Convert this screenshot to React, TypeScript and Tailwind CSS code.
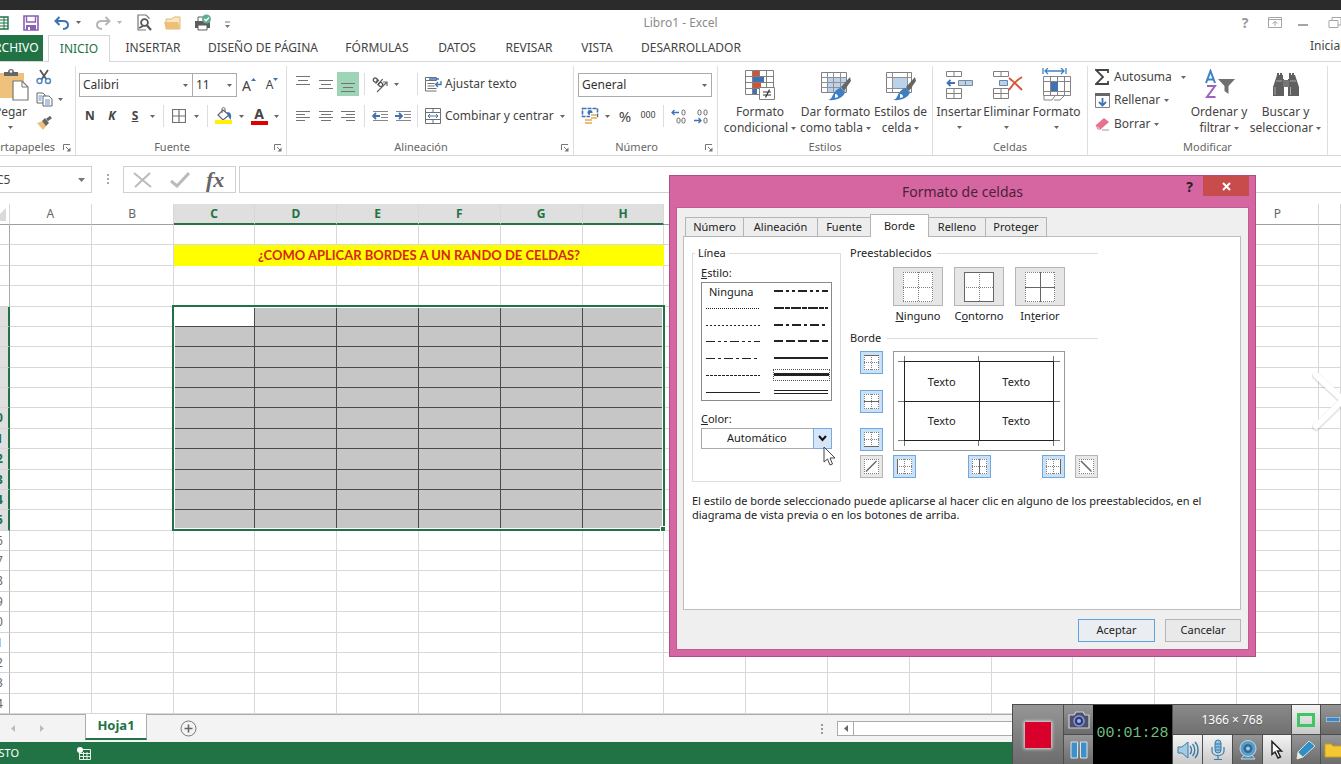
import React from "react";
import clsx from "clsx";

type Kids = { children?: React.ReactNode };

function Svg({ w, h, children, className }: Kids & { w: number; h: number; className?: string }) {
  return (
    <svg width={w} height={h} viewBox={`0 0 ${w} ${h}`} fill="none" aria-hidden="true" className={clsx("shrink-0", className)}>
      {children}
    </svg>
  );
}

function Caret({ light }: { light?: boolean }) {
  return (
    <Svg w={5} h={3}>
      <path d="M0 0h5L2.500 3z" fill={light ? "#b5b5b5" : "#666"} />
    </Svg>
  );
}

/* ---------- quick access toolbar ---------- */

const ExcelLogo = () => (
  <Svg w={20} h={16}>
    <path d="M0 2l11-2v16L0 14z" fill="#1f7246" />
    <path d="M11 2h8v12h-8" fill="#fff" stroke="#1f7246" strokeWidth="1.4" />
    <path d="M11 5h8M11 8h8M11 11h8M15 2v12" stroke="#1f7246" />
  </Svg>
);

const SaveIcon = () => (
  <Svg w={16} h={16}>
    <path d="M1 1h14v14H1z" fill="#fff" stroke="#8a5fb5" strokeWidth="1.6" />
    <path d="M3.5 1v6h9V1" stroke="#8a5fb5" strokeWidth="1.4" />
    <path d="M3 10h10v5H3z" fill="#8a5fb5" />
    <path d="M5 12h2v3H5z" fill="#fff" />
  </Svg>
);

const UndoIcon = ({ color, flip }: { color: string; flip?: boolean }) => (
  <Svg w={16} h={14} className={flip ? "-scale-x-100" : ""}>
    <path d="M5.5 1L1.5 5l4 4" stroke={color} strokeWidth="2" />
    <path d="M2 5h7c3 0 5 1.600 5 4s-2 3.800-5 4" stroke={color} strokeWidth="2" />
  </Svg>
);

const PreviewIcon = () => (
  <Svg w={17} h={17}>
    <path d="M13 5V4l-3-3H2v15h8" stroke="#777" strokeWidth="1.2" />
    <circle cx="8.500" cy="8.500" r="3.400" stroke="#555" strokeWidth="1.800" />
    <path d="M11 11.500l4 4.500" stroke="#555" strokeWidth="2.200" />
    <path d="M3 14l4-2" stroke="#555" strokeWidth="1.500" />
  </Svg>
);

const FolderIcon = () => (
  <Svg w={18} h={14}>
    <path d="M2 13V3h6l2-2h6v12z" fill="#fbe6c4" stroke="#e5b970" />
    <path d="M0 6h14l2 7H2z" fill="#eebf78" />
  </Svg>
);

const PrintIcon = () => (
  <Svg w={18} h={18}>
    <path d="M1 7h15v7H1z" fill="#5d5d5d" />
    <path d="M4 7V3h8v4M4 11h9v5H4z" fill="#fff" stroke="#5d5d5d" />
    <circle cx="12.500" cy="5" r="4.500" fill="#5fae90" />
    <path d="M10.300 5l1.700 1.700 3-3.200" stroke="#fff" strokeWidth="1.300" />
  </Svg>
);

function TitleBar() {
  return (
    <header className="relative flex h-[25px] shrink-0 items-center text-[12px] text-[#8a8a8a]">
      <div className="-ml-[11px] flex items-center">
        <ExcelLogo />
        <button aria-label="Guardar" className="ml-[14px]"><SaveIcon /></button>
        <button aria-label="Deshacer" className="ml-[15px] flex items-center gap-[6px]"><UndoIcon color="#3f72b5" /><Caret /></button>
        <button aria-label="Rehacer" className="ml-[14px] flex items-center gap-[6px]"><UndoIcon color="#b5b5b5" flip /><Caret light /></button>
        <button aria-label="Vista previa" className="ml-[14px]"><PreviewIcon /></button>
        <button aria-label="Abrir" className="ml-[11px]"><FolderIcon /></button>
        <button aria-label="Imprimir" className="ml-[12px]"><PrintIcon /></button>
        <button aria-label="Personalizar" className="ml-[12px] pt-1">
          <Svg w={7} h={8}><path d="M1 1h5" stroke="#777" /><path d="M1 4h5L3.500 7z" fill="#777" /></Svg>
        </button>
      </div>
      <h1 className="flex-1 pl-[212px] pr-[320px] text-center whitespace-nowrap">Libro1 - Excel</h1>
      <div className="-mr-px flex items-center gap-[16px]">
        <button aria-label="Ayuda" className="w-[14px] text-[14px] font-bold text-[#9a9a9a]">?</button>
        <button aria-label="Opciones de cinta">
          <Svg w={14} h={11}><path d="M.5.500h13v10H.5zM.5 2.500h13M7 9V4.500M4.500 6.500L7 4.500l2.500 2" stroke="#a5a5a5" /></Svg>
        </button>
        <button aria-label="Minimizar" className="w-[14px] pt-1"><Svg w={10} h={2}><path d="M0 1h10" stroke="#a5a5a5" strokeWidth="2" /></Svg></button>
        <button aria-label="Restaurar">
          <Svg w={14} h={11}><path d="M1 3.500h9v7H1zM4 3V.5h9V8h-3" stroke="#a5a5a5" /></Svg>
        </button>
      </div>
    </header>
  );
}

function TabRow() {
  const tabs: [string, string][] = [
    ["INSERTAR", "w-[86px]"],
    ["DISEÑO DE PÁGINA", "w-[134px]"],
    ["FÓRMULAS", "w-[94px]"],
    ["DATOS", "w-[66px]"],
    ["REVISAR", "w-[78px]"],
    ["VISTA", "w-[58px]"],
    ["DESARROLLADOR", "w-[130px]"],
  ];
  return (
    <nav className="flex h-[27px] shrink-0 border-b border-[#d6d6d6] text-[12px] whitespace-nowrap text-[#444]">
      <button className="-ml-[18px] flex w-[61px] items-center justify-center bg-[#217346] text-white">ARCHIVO</button>
      <button className="-mb-px ml-[5px] w-[62px] border border-b-0 border-[#d6d6d6] bg-white text-[#217346]">INICIO</button>
      {tabs.map(([label, w]) => (
        <button key={label} className={clsx("flex shrink-0 items-center justify-center", w)}>{label}</button>
      ))}
      <a href="#iniciar" className="-mr-[40px] ml-auto w-[71px] pt-[2px]">Iniciar sesión</a>
    </nav>
  );
}

/* ---------- ribbon ---------- */

function Group({ label, width, launcher, children, className }: Kids & { label: string; width: string; launcher?: boolean; className?: string }) {
  return (
    <section className={clsx("flex shrink-0 flex-col", width, className)}>
      <div className="mt-[4px] flex flex-1 flex-col border-r border-[#dedede]">
        <div className="flex h-[74px]">{children}</div>
        <div className={clsx("relative flex h-[14px] items-center justify-center text-[11px] text-[#666]", launcher && "pr-[18px]")}>
          {label}
          {launcher && (
            <button aria-label={`Más opciones de ${label}`} className="absolute right-[4px] bottom-[2px]">
              <Svg w={8} h={8}><path d="M.5 6V.5H7M3 3l3 3" stroke="#777" /><path d="M7.500 3.500v4h-4z" fill="#777" /></Svg>
            </button>
          )}
        </div>
      </div>
    </section>
  );
}

const Sep = ({ className }: { className?: string }) => <span className={clsx("h-[22px] w-px shrink-0 bg-[#dedede]", className)} />;

function Tool({ label, w, children, on }: Kids & { label: string; w: string; on?: boolean }) {
  return (
    <button aria-label={label} className={clsx("flex h-[24px] shrink-0 items-center justify-center", w, on && "bg-[#9fd5b7]")}>
      {children}
    </button>
  );
}

function Combo({ label, value, width, className }: { label: string; value: string; width: string; className?: string }) {
  return (
    <span className={clsx("relative flex h-[24px] shrink-0 items-center", width, className)}>
      <select aria-label={label} className="h-full w-full appearance-none border border-[#ababab] bg-white pl-[3px] text-[12px] text-[#333]">
        <option>{value}</option>
      </select>
      <span className="pointer-events-none absolute right-[5px]"><Caret /></span>
    </span>
  );
}

const Lines = ({ rows }: { rows: [number, number, number][] }) => (
  <Svg w={16} h={16}>
    {rows.map(([x, y, len]) => <path key={y} d={`M${x} ${y + 0.5}h${len}`} stroke="#737373" />)}
  </Svg>
);

const Indent = ({ out }: { out?: boolean }) => (
  <Svg w={17} h={13}>
    <path d="M1 1.500h15M9 4.500h7M9 7.500h7M1 10.500h15" stroke="#888" />
    <path d={out ? "M8 6H1M4 3L1 6l3 3" : "M0 6h7M4 3l3 3-3 3"} stroke="#3f72b5" strokeWidth="1.800" />
  </Svg>
);

function Big({ icon, lines, width, below }: { icon: React.ReactNode; lines: string[]; width: string; below?: boolean }) {
  return (
    <button className={clsx("flex shrink-0 flex-col items-center text-[12px] leading-[16px] whitespace-nowrap text-[#444]", width)}>
      <span className="flex h-[38px] items-center">{icon}</span>
      {lines.map((t, i) => (
        <span key={t} className="flex items-center gap-[3px]">
          {t}
          {!below && i === lines.length - 1 && <Caret />}
        </span>
      ))}
      {below && <span className="mt-[6px]"><Caret /></span>}
    </button>
  );
}

const PasteIcon = () => (
  <Svg w={32} h={34}>
    <path d="M1 5h26v25H1z" fill="#eec27d" />
    <path d="M7 8V4h4c0-4 6-4 6 0h4v4z" fill="#666" />
    <circle cx="14" cy="3.500" r="1.300" fill="#fff" />
    <path d="M16 13h9l6 6v13H16z" fill="#fff" stroke="#777" strokeWidth="1.200" />
    <path d="M25 13v6h6" stroke="#777" />
  </Svg>
);
const CutIcon = () => (
  <Svg w={16} h={16}>
    <path d="M4 1l6.500 9.500M12 1L5.500 10.500" stroke="#555" strokeWidth="1.800" />
    <circle cx="3.500" cy="12" r="2.500" stroke="#4d82bd" strokeWidth="1.400" />
    <circle cx="12" cy="12" r="2.500" stroke="#4d82bd" strokeWidth="1.400" />
  </Svg>
);
const CopyIcon = () => (
  <Svg w={17} h={15}>
    <path d="M1 1h6l2 2v8H1z" fill="#fff" stroke="#666" />
    <path d="M7 4h6l3 3v7H7z" fill="#fff" stroke="#666" />
    <path d="M2.500 4h4M2.500 6h3M2.500 8h3M9 8h5M9 10h5M9 12h5" stroke="#5d8fc9" />
  </Svg>
);
const BrushIcon = () => (
  <Svg w={17} h={14}>
    <path d="M1 7l6-2 4 4-4 5z" fill="#eebf78" />
    <path d="M6 5l3-3 4 5-3 3z" fill="#666" />
    <path d="M11 4l4-3" stroke="#666" strokeWidth="3" />
  </Svg>
);
const GridIcon = () => (
  <Svg w={14} h={14}><path d="M.5.500h13v13H.5zM7 .5v13M.5 7h13" stroke="#707070" strokeWidth="1.200" /></Svg>
);
const BucketIcon = () => (
  <Svg w={17} h={18}>
    <path d="M8 3l6 5-6 5-5-5z" fill="#fff" stroke="#666" strokeWidth="1.200" />
    <path d="M7 6V2c0-2 3-2 3 0v3" stroke="#666" />
    <path d="M12 5c4 0 5 3 3.500 8L13 9z" fill="#3f72b5" />
    <path d="M0 13h17v4H0z" fill="#fff100" />
  </Svg>
);
const WrapIcon = () => (
  <Svg w={17} h={16}>
    <path d="M.5 1.500h11v3H.5zM.5 4.500v10.500h11M2.500 7.500h7M2.500 10h7M2.500 12.500h9" stroke="#707070" />
    <path d="M4 3h10M16 5v3.500h-5M13 6l-2.500 2.500L13 11" stroke="#3f72b5" strokeWidth="1.300" />
  </Svg>
);
const MergeIcon = () => (
  <Svg w={16} h={16}>
    <path d="M.5.500h15v15H.5zM.5 4.500h15M.5 11.500h15M8 .5v4M8 11.500v4" stroke="#707070" />
    <path d="M3 8h10M5 6L3 8l2 2M11 6l2 2-2 2" stroke="#3f72b5" />
  </Svg>
);
const MoneyIcon = () => (
  <Svg w={18} h={18}>
    <path d="M1.500 1.500h15v8h-15z" fill="#fff" stroke="#3f72b5" strokeWidth="1.600" strokeDasharray="4 1" />
    <circle cx="9" cy="5.500" r="2.500" fill="#3f72b5" />
    <path d="M9 6h7v9H9z" fill="#fff" />
    <path d="M10 7h6v2h-6zM10 10h6v2h-6zM4 12h7v2H4zM4 15h7v2H4z" fill="#ebbf79" />
  </Svg>
);
const Decimals = ({ less }: { less?: boolean }) => (
  <Svg w={16} h={15}>
    {(less ? [[5, 1], [11, 1], [11, 9]] : [[11, 1], [6, 9], [11, 9]]).map(([x, y]) => (
      <rect key={`${x}-${y}`} x={x} y={y} width="3" height="5" rx="1.500" stroke="#666" />
    ))}
    <path d={less ? "M1 11.500h7M5.500 9l2.500 2.500L5.500 14" : "M8 3.500H1M3.500 1L1 3.500 3.500 6"} stroke="#3f72b5" strokeWidth="1.300" />
  </Svg>
);
const CondIcon = () => (
  <Svg w={32} h={32}>
    <path d="M1.500 1.500h28v24h-28zM8.500 1.500v24M15.500 1.500v24M22.500 1.500v24M1.500 7.500h28M1.500 13.500h28M1.500 19.500h28" stroke="#808080" fill="#fff" />
    <path d="M9 2h6v5H9zM9 14h8v5H9z" fill="#d35230" />
    <path d="M9 8h11v5H9zM9 20h4v5H9z" fill="#3f72b5" />
    <path d="M15.500 18.500h15v12h-15z" fill="#fff" stroke="#808080" />
    <path d="M19 23h8M19 26h8M25.500 20.500l-4 8" stroke="#333" strokeWidth="1.200" />
  </Svg>
);
const TableBrush = ({ single }: { single?: boolean }) => (
  <Svg w={32} h={32}>
    <path d="M1.500 3.500h25v20h-25z" fill="#fff" stroke="#808080" />
    <path d={single ? "M7 8h15v11H7z" : "M8 9h18v14H8z"} fill="#bcd2ea" />
    <path d={single ? "M7.500 3.500v20M22.500 3.500v20M1.500 8.500h25M1.500 19.500h25" : "M7.500 3.500v20M13.500 3.500v20M20.500 3.500v20M1.500 8.500h25M1.500 13.500h25M1.500 18.500h25"} stroke="#909090" />
    <path d="M30 8l-9 10 3 4 7-10z" fill="#666" />
    <path d="M21 19l4 4c-1 5-8 9-17 8 4-1 4-4 6-7 2-3 4-5 7-5z" fill="#3f7fc1" />
    <path d="M15 25c2 0 3 1 3 3l-3 1z" fill="#fff" />
  </Svg>
);
const InsertCells = () => (
  <Svg w={30} h={30}>
    <path d="M2.500 1.500h15v5h-15zM10 1.500v5M2.500 18.500h15v10h-15zM10 18.500v10M2.500 23.500h15" fill="#fff" stroke="#808080" />
    <path d="M14.500 10.500h14v5h-14zM21.500 10.500v5" fill="#bcd2ea" stroke="#7a8ba0" />
    <path d="M11 13H3.500M6.500 10l-3 3 3 3" stroke="#3f72b5" strokeWidth="1.800" />
  </Svg>
);
const DeleteCells = () => (
  <Svg w={32} h={30}>
    <path d="M2.500 1.500h15v5h-15zM10 1.500v5M2.500 18.500h15v10h-15zM10 18.500v10M2.500 23.500h15" fill="#fff" stroke="#808080" />
    <path d="M8.500 10.500h8v5h-8z" fill="#bcd2ea" stroke="#6485b0" />
    <path d="M18 8c4 3 9 8 13 12M31 7c-5 3-10 8-13 13" stroke="#d9573b" strokeWidth="2" />
  </Svg>
);
const FormatCells = () => (
  <Svg w={30} h={34}>
    <path d="M1 0v6M24 0v6M3 3h19M6 0L3 3l3 3M19 0l3 3-3 3" stroke="#3f82c4" strokeWidth="1.300" />
    <path d="M1.500 8.500h27v19h-27zM8.500 8.500v19M15.500 8.500v19M22.500 8.500v19M1.500 13.500h27M1.500 23.500h27" fill="#fff" stroke="#858585" />
    <path d="M9 14h7v9H9z" fill="#3f72b5" />
    <path d="M2 28v4h8l3-4M12 32h6l4-4" stroke="#858585" />
  </Svg>
);
const SortIcon = () => (
  <Svg w={32} h={32}>
    <path d="M3 14L7.500 2 12 14M4.500 10.500h6" stroke="#3f82c4" strokeWidth="2" />
    <path d="M4 17h8L4 28h8.500" stroke="#9b62c0" strokeWidth="2" />
    <path d="M15 10h17l-6.500 7v8l-4-3v-5z" fill="#707070" />
  </Svg>
);
const Binoculars = () => (
  <Svg w={28} h={26}>
    <path d="M5 3h6v4h1v17H1V15L4 6zM17 3h6l1 3 3 9v9H16V7h1z" fill="#5f5f5f" />
    <path d="M11 8h6v7h-6z" fill="#777" />
    <path d="M5 2h6M17 2h6" stroke="#5f5f5f" strokeWidth="2" strokeDasharray="2 1" />
    <path d="M3 15v8M18.500 15v8M4 9h6M18 9h6" stroke="#aaa" />
  </Svg>
);

function Ribbon() {
  return (
    <div className="flex h-[94px] shrink-0 border-b border-[#d6d6d6] text-[12px] text-[#444]">
      <Group label="Portapapeles" width="w-[91px]" className="-ml-[15px]" launcher>
        <button className="flex w-[51px] flex-col items-center leading-[16px]">
          <span className="flex h-[38px] items-center pl-1"><PasteIcon /></span>
          Pegar
          <span className="mt-[6px]"><Caret /></span>
        </button>
        <div className="flex flex-col pt-px">
          <button aria-label="Cortar" className="flex h-[20px] items-center"><CutIcon /></button>
          <button aria-label="Copiar" className="flex h-[24px] items-center gap-[5px] pt-px"><CopyIcon /><Caret /></button>
          <button aria-label="Copiar formato" className="flex h-[24px] items-center"><BrushIcon /></button>
        </div>
      </Group>

      <Group label="Fuente" width="w-[211px]" launcher>
        <div className="flex flex-col gap-[7px] pt-[7px] pl-[3px]">
          <div className="flex items-center">
            <Combo label="Fuente" value="Calibri" width="w-[114px]" />
            <Combo label="Tamaño" value="11" width="w-[45px]" className="-ml-px" />
            <Tool label="Aumentar tamaño" w="w-[24px]">
              <span className="text-[14px]">A</span><Svg w={5} h={14}><path d="M0 3h5L2.500 0z" fill="#3f72b5" /></Svg>
            </Tool>
            <Tool label="Disminuir tamaño" w="w-[22px]">
              <span className="text-[12px]">A</span><Svg w={5} h={14}><path d="M0 0h5L2.500 3z" fill="#3f72b5" /></Svg>
            </Tool>
          </div>
          <div className="flex items-center text-[12px] font-bold">
            <Tool label="Negrita" w="w-[22px]">N</Tool>
            <Tool label="Cursiva" w="w-[22px]"><i>K</i></Tool>
            <Tool label="Subrayado" w="w-[24px]"><u>S</u></Tool>
            <Tool label="Más subrayados" w="w-[10px]"><Caret /></Tool>
            <Sep className="ml-[6px]" />
            <Tool label="Bordes" w="w-[30px]"><GridIcon /></Tool>
            <Tool label="Más bordes" w="w-[5px]"><Caret /></Tool>
            <Sep className="ml-[8px]" />
            <Tool label="Color de relleno" w="w-[31px]"><BucketIcon /></Tool>
            <Tool label="Más rellenos" w="w-[5px]"><Caret /></Tool>
            <Tool label="Color de fuente" w="w-[30px]">
              <span className="flex w-[17px] flex-col items-center border-b-4 border-[#e00000] text-[14px] leading-[14px]">A</span>
            </Tool>
            <Tool label="Más colores" w="w-[5px]"><Caret /></Tool>
          </div>
        </div>
      </Group>

      <Group label="Alineación" width="w-[287px]" launcher>
        <div className="flex flex-col gap-[8px] pt-[6px] pl-[4px]">
          <div className="flex items-center">
            <Tool label="Alinear arriba" w="w-[23px]"><Lines rows={[[1, 0, 14], [3, 4, 10], [1, 8, 14]]} /></Tool>
            <Tool label="Alinear en medio" w="w-[23px]"><Lines rows={[[1, 4, 14], [3, 8, 10], [1, 12, 14]]} /></Tool>
            <Tool label="Alinear abajo" w="w-[22px]" on><Lines rows={[[1, 7, 14], [3, 11, 10], [1, 15, 14]]} /></Tool>
            <Sep className="ml-[5px]" />
            <Tool label="Orientación" w="w-[29px]">
              <Svg w={18} h={18}>
                <g transform="rotate(40 7 8)" stroke="#555" strokeWidth="1.300">
                  <circle cx="3" cy="7.500" r="2" /><path d="M5.500 5v5M8 2v8" /><circle cx="10" cy="7.500" r="2" />
                </g>
                <path d="M6 17L16 7M16 11V7h-4" stroke="#666" strokeWidth="1.200" />
              </Svg>
            </Tool>
            <Caret />
            <Sep className="ml-[18px]" />
            <button className="ml-[7px] flex items-center gap-[3px]"><WrapIcon />Ajustar texto</button>
          </div>
          <div className="flex items-center">
            <Tool label="Izquierda" w="w-[23px]"><Lines rows={[[1, 3, 14], [1, 6, 9], [1, 9, 14], [1, 12, 9]]} /></Tool>
            <Tool label="Centrar" w="w-[23px]"><Lines rows={[[1, 3, 14], [3, 6, 10], [1, 9, 14], [3, 12, 10]]} /></Tool>
            <Tool label="Derecha" w="w-[22px]"><Lines rows={[[1, 3, 14], [6, 6, 9], [1, 9, 14], [6, 12, 9]]} /></Tool>
            <Sep className="ml-[5px]" />
            <Tool label="Disminuir sangría" w="w-[30px]"><Indent out /></Tool>
            <Tool label="Aumentar sangría" w="w-[17px]"><Indent /></Tool>
            <Sep className="ml-[5px]" />
            <button className="ml-[7px] flex items-center gap-[4px] whitespace-nowrap"><MergeIcon />Combinar y centrar</button>
            <span className="ml-[6px]"><Caret /></span>
          </div>
        </div>
      </Group>

      <Group label="Número" width="w-[144px]" launcher>
        <div className="flex flex-col gap-[7px] pt-[7px] pl-[4px]">
          <Combo label="Formato de número" value="General" width="w-[134px]" />
          <div className="flex items-center">
            <Tool label="Moneda" w="w-[24px]"><MoneyIcon /></Tool>
            <Tool label="Más monedas" w="w-[10px]"><Caret /></Tool>
            <Tool label="Porcentaje" w="w-[26px]"><span className="text-[15px]">%</span></Tool>
            <Tool label="Millares" w="w-[20px]"><span className="font-['Roboto'] text-[9px]">000</span></Tool>
            <Sep className="ml-[5px]" />
            <Tool label="Aumentar decimales" w="w-[30px]"><Decimals /></Tool>
            <Tool label="Disminuir decimales" w="w-[14px]"><Decimals less /></Tool>
          </div>
        </div>
      </Group>

      <Group label="Estilos" width="w-[215px]">
        <Big icon={<CondIcon />} lines={["Formato", "condicional"]} width="w-[84px]" />
        <Big icon={<TableBrush />} lines={["Dar formato", "como tabla"]} width="w-[67px]" />
        <Big icon={<TableBrush single />} lines={["Estilos de", "celda"]} width="w-[63px]" />
      </Group>

      <Group label="Celdas" width="w-[155px]">
        <Big icon={<InsertCells />} lines={["Insertar"]} width="w-[52px]" below />
        <Big icon={<DeleteCells />} lines={["Eliminar"]} width="w-[43px]" below />
        <Big icon={<FormatCells />} lines={["Formato"]} width="w-[57px]" below />
      </Group>

      <Group label="Modificar" width="w-[240px]">
        <div className="flex w-[98px] flex-col pl-[7px] whitespace-nowrap">
          <button className="flex h-[22px] items-center gap-[5px]">
            <Svg w={14} h={16}><path d="M13 4V1H1l7 7-7 7h12v-3" stroke="#444" strokeWidth="1.800" /></Svg>
            Autosuma <span className="ml-[4px]"><Caret /></span>
          </button>
          <button className="flex h-[24px] items-center gap-[4px]">
            <Svg w={15} h={15}><path d="M.5.500h14v14H.5z" stroke="#808080" /><path d="M0 0h15v3H0z" fill="#666" /><path d="M7.500 5v7M4 9l3.500 3.500L11 9" stroke="#3f72b5" strokeWidth="1.800" /></Svg>
            Rellenar <Caret />
          </button>
          <button className="flex h-[24px] items-center gap-[4px]">
            <Svg w={15} h={14}><path d="M1 8l8-7 5 4-8 7H3z" fill="#e8728e" /><path d="M1 8l5 4H3z" fill="#fff" stroke="#e8728e" /><path d="M7 13h7" stroke="#999" /></Svg>
            Borrar <Caret />
          </button>
        </div>
        <Big icon={<SortIcon />} lines={["Ordenar y", "filtrar"]} width="w-[66px]" />
        <Big icon={<Binoculars />} lines={["Buscar y", "seleccionar"]} width="w-[67px]" />
      </Group>
    </div>
  );
}

function FormulaBar() {
  return (
    <div className="flex h-[48px] shrink-0 items-start pt-[10px]">
      <span className="relative -ml-[8px] flex h-[27px] w-[100px] items-center">
        <input aria-label="Cuadro de nombres" defaultValue="C5" className="h-full w-full border border-[#d0d0d0] pl-[3px] text-[12px] text-[#444]" />
        <span className="absolute right-[7px]"><Svg w={7} h={4}><path d="M0 0h7L3.500 4z" fill="#777" /></Svg></span>
      </span>
      <Svg w={2} h={27} className="ml-[15px]"><path d="M1 8v12" stroke="#aaa" strokeWidth="2" strokeDasharray="2 2" /></Svg>
      <div className="ml-[14px] flex h-[27px] w-[113px] items-center border border-[#d0d0d0] pl-[9px]">
        <button aria-label="Cancelar entrada"><Svg w={19} h={16}><path d="M1 1l17 14M17 1L2 15" stroke="#bbb" strokeWidth="2" /></Svg></button>
        <button aria-label="Aceptar entrada" className="ml-[18px]"><Svg w={20} h={16}><path d="M1 9l6 5L19 1" stroke="#bbb" strokeWidth="3" /></Svg></button>
        <button aria-label="Insertar función" className="ml-[16px] font-['Liberation_Serif'] text-[22px] leading-none font-bold text-[#666] italic">fx</button>
      </div>
      <input aria-label="Barra de fórmulas" className="ml-[3px] h-[27px] min-w-0 flex-1 border border-r-0 border-[#d0d0d0]" />
    </div>
  );
}

/* ---------- worksheet ---------- */

const COLS = "ABCDEFGHIJKLMNOPQ".split("");
const ROWS = Array.from({ length: 24 }, (_, i) => i + 1);
const ROW_GRID = "grid grid-cols-[10px_repeat(16,6.1%)_1fr]";

function Sheet() {
  return (
    <table className="flex min-h-0 flex-1 flex-col overflow-hidden text-[12px]">
      <thead className="block h-[21px] shrink-0">
        <tr className={clsx("h-full", ROW_GRID)}>
          <th className="overflow-hidden border-r border-b border-[#a0a0a0] border-r-[#d8d8d8]">
            <Svg w={6} h={13} className="mt-[4px]"><path d="M6 0v13H0V6z" fill="#dadada" /></Svg>
          </th>
          {COLS.map((c, i) => {
            const sel = i >= 2 && i <= 7;
            return (
              <th
                key={c}
                scope="col"
                className={clsx(
                  "overflow-hidden border-r border-[#d8d8d8] leading-[19px]",
                  sel ? "border-b-2 border-b-[#217346] bg-[#dfdfdf] font-bold text-[#217346]" : "border-b border-b-[#a0a0a0] font-normal text-[#666]",
                )}
              >
                {i < 16 ? c : ""}
              </th>
            );
          })}
        </tr>
      </thead>
      <tbody className="flex min-h-0 flex-1 flex-col">
        {ROWS.map((r) => {
          const rowSel = r >= 5 && r <= 15;
          return (
            <tr key={r} className={clsx("min-h-0 flex-1", ROW_GRID)}>
              <th
                scope="row"
                className={clsx(
                  "min-h-0 border-b border-[#d4d4d4]",
                  rowSel ? "border-r-2 border-r-[#217346] bg-[#dfdfdf] font-bold text-[#217346]" : "border-r border-r-[#a8a8a8] font-normal text-[#666]",
                )}
              >
                <span className="-ml-[16px] block w-[24px] text-center leading-[20px]">{r}</span>
              </th>
              {COLS.map((c, i) => {
                if (r === 2 && i > 2 && i <= 7) return null;
                if (r === 2 && i === 2)
                  return (
                    <td key={c} colSpan={6} className="col-span-6 flex min-h-0 items-center justify-center bg-[#ffff00] font-['Lato'] text-[13px] font-bold whitespace-nowrap text-[#d8261c]">
                      ¿COMO APLICAR BORDES A UN RANDO DE CELDAS?
                    </td>
                  );
                const sel = rowSel && i >= 2 && i <= 7;
                const first = r === 5 && i === 2;
                return (
                  <td
                    key={c}
                    className={clsx(
                      "min-h-0 border-r border-b",
                      sel ? "border-[#4a4a4a]" : "border-[#d8d8d8]",
                      sel && !first && "bg-[#c6c6c6]",
                      first && "relative",
                    )}
                  >
                    {first && (
                      <span className="absolute -top-[2px] -left-[2px] z-10 h-[calc(1100%+13px)] w-[calc(600%+9px)] border-2 border-[#217346] shadow-[inset_0_0_0_1px_#fff]">
                        <span className="absolute -right-[3px] -bottom-[3px] size-[6px] border border-white bg-[#217346]" />
                      </span>
                    )}
                  </td>
                );
              })}
            </tr>
          );
        })}
      </tbody>
    </table>
  );
}

function SheetTabs() {
  return (
    <div className="flex h-[28px] shrink-0 border-t border-[#ababab] bg-[#f3f3f3]">
      <div className="flex w-[85px] items-center gap-[25px] pl-[11px]">
        <button aria-label="Hoja anterior"><Svg w={4} h={7}><path d="M4 0v7L0 3.500z" fill="#bbb" /></Svg></button>
        <button aria-label="Hoja siguiente"><Svg w={4} h={7}><path d="M0 0v7l4-3.500z" fill="#bbb" /></Svg></button>
      </div>
      <button className="-mt-px flex h-[26px] w-[62px] items-center justify-center border-x border-b-2 border-x-[#ababab] border-b-[#217346] bg-white text-[13px] font-bold text-[#217346]">Hoja1</button>
      <button aria-label="Hoja nueva" className="ml-[33px]">
        <Svg w={17} h={17}><circle cx="8.500" cy="8.500" r="7.500" stroke="#777" /><path d="M8.500 4.500v8M4.500 8.500h8" stroke="#666" strokeWidth="1.600" /></Svg>
      </button>
      <div className="ml-auto flex w-[39%] items-center">
        <Svg w={2} h={10} className="ml-[3px]"><path d="M1 0v10" stroke="#999" strokeWidth="2" strokeDasharray="2 2" /></Svg>
        <button aria-label="Desplazar a la izquierda" className="ml-[14px] flex h-[15px] w-[17px] items-center justify-center border border-[#ababab] bg-white">
          <Svg w={4} h={7}><path d="M4 0v7L0 3.500z" fill="#666" /></Svg>
        </button>
        <div className="-ml-px h-[15px] flex-1 border border-[#ababab] bg-white" />
      </div>
    </div>
  );
}

/* ---------- format cells dialog ---------- */

type Edge = "top" | "mid" | "bottom" | "left" | "center" | "right" | "up" | "down";

function BorderIcon({ size, solid }: { size: number; solid: Edge[] }) {
  const a = 0.5;
  const b = size - 0.5;
  const m = Math.floor(size / 2) + 0.5;
  const paths: Record<Edge, string> = {
    top: `M0 ${a}H${size}`,
    mid: `M0 ${m}H${size}`,
    bottom: `M0 ${b}H${size}`,
    left: `M${a} 0V${size}`,
    center: `M${m} 0V${size}`,
    right: `M${b} 0V${size}`,
    up: `M2 ${b - 2}L${b - 2} 2`,
    down: `M2 2L${b - 2} ${b - 2}`,
  };
  const diagonal = solid.includes("up") || solid.includes("down");
  const base: Edge[] = diagonal ? ["top", "bottom", "left", "right"] : ["top", "mid", "bottom", "left", "center", "right"];
  return (
    <Svg w={size} h={size}>
      <path d={`M0 0h${size}v${size}H0z`} fill="#fff" />
      {base.map((e) => <path key={e} d={paths[e]} stroke="#808080" strokeDasharray="1 1" />)}
      {solid.map((e) => <path key={`s-${e}`} d={paths[e]} stroke="#666" strokeWidth={diagonal ? 1.5 : 1} />)}
    </Svg>
  );
}

function EdgeButton({ label, edge, off }: { label: string; edge: Edge; off?: boolean }) {
  return (
    <button
      aria-label={label}
      className={clsx("flex size-[23px] items-center justify-center border", off ? "border-[#b5b5b5] bg-[#e8e8e8]" : "border-[#6fa8dc] bg-[#c9e0f7]")}
    >
      <BorderIcon size={15} solid={[edge]} />
    </button>
  );
}

function Preset({ text, mark, solid }: { text: string; mark: number; solid: Edge[] }) {
  return (
    <button className="flex w-[50px] flex-col items-center">
      <span className="flex h-[39px] w-full items-center justify-center border border-[#b5b5b5] bg-[#e6e6e6]">
        <BorderIcon size={30} solid={solid} />
      </span>
      <span className="mt-[2px] leading-[16px]">{text.slice(0, mark)}<u>{text[mark]}</u>{text.slice(mark + 1)}</span>
    </button>
  );
}

const STYLES: { name: string; w: number; dash?: string; picked?: boolean; double?: boolean }[] = [
  { name: "Punteado fino", w: 1, dash: "1 1" },
  { name: "Punteado", w: 1, dash: "2 2" },
  { name: "Raya punto punto", w: 1, dash: "9 3 3 3 3 3" },
  { name: "Raya punto", w: 1, dash: "9 3 3 3" },
  { name: "Rayas", w: 1, dash: "3 1" },
  { name: "Fina", w: 1 },
  { name: "Raya punto punto media", w: 2, dash: "9 3 3 3 3 3" },
  { name: "Raya punto inclinada", w: 2, dash: "10 1 5 1" },
  { name: "Raya punto media", w: 2, dash: "9 3 3 3" },
  { name: "Rayas medias", w: 2, dash: "9 3" },
  { name: "Media", w: 2 },
  { name: "Gruesa", w: 3, picked: true },
  { name: "Doble", w: 1, double: true },
];

function Dialog() {
  const tabs: [string, string][] = [
    ["Número", "w-[59px]"],
    ["Alineación", "w-[75px]"],
    ["Fuente", "w-[54px]"],
    ["Borde", "w-[59px]"],
    ["Relleno", "w-[58px]"],
    ["Proteger", "w-[62px]"],
  ];
  return (
    <div role="dialog" aria-labelledby="dlg-title" className="absolute top-[175px] left-[669px] z-20 w-[587px] border border-[#b04f85] bg-[#d566a1] px-[6px] pb-[6px] text-[11px] text-[#222]">
      <div className="relative flex h-[31px] items-center justify-center">
        <h2 id="dlg-title" className="text-[14px] text-[#4b2238]">Formato de celdas</h2>
        <button aria-label="Ayuda" className="absolute top-0 right-[56px] text-[14px] font-bold">?</button>
        <button aria-label="Cerrar" className="absolute top-0 right-0 flex h-[20px] w-[46px] items-center justify-center bg-[#c84c4c]">
          <Svg w={9} h={9}><path d="M1 1l7 7M8 1L1 8" stroke="#fff" strokeWidth="2" /></Svg>
        </button>
      </div>
      <div className="border border-[#c05c92] bg-[#efefef] pt-[7px] pr-[7px] pb-[7px] pl-[6px]">
        <div role="tablist" className="relative z-10 -mb-px flex h-[22px] items-end pl-[2px]">
          {tabs.map(([t, w]) => {
            const on = t === "Borde";
            return (
              <button
                key={t}
                role="tab"
                aria-selected={on}
                className={clsx("-mr-px shrink-0 border border-[#b5b5b5]", w, on ? "h-[23px] border-b-0 bg-white" : "h-[20px] bg-[#ededed]")}
              >
                {t}
              </button>
            );
          })}
        </div>
        <div className="h-[374px] border border-[#bdbdbd] bg-white pt-[8px] pl-[8px]">
          <div className="flex gap-[9px]">
            <fieldset className="h-[237px] w-[149px] border border-[#dcdcdc] px-[8px]">
              <legend className="-ml-[6px] h-[16px] bg-white px-[3px] leading-[16px]">Línea</legend>
              <p id="style-label" className="mt-[4px] leading-[16px]"><u>E</u>stilo:</p>
              <div role="listbox" aria-labelledby="style-label" className="mt-px grid h-[119px] grid-flow-col grid-cols-[72px_55px] grid-rows-7 border border-[#8a8a8a] bg-white">
                <button role="option" aria-selected={false} className="pl-[7px] text-left leading-[17px]">Ninguna</button>
                {STYLES.map((s, i) => (
                  <button
                    key={s.name}
                    role="option"
                    aria-label={s.name}
                    aria-selected={!!s.picked}
                    className={clsx("flex items-center", s.picked && "my-[3px] outline outline-dotted outline-[#555]")}
                  >
                    <svg className="h-[6px] w-full" aria-hidden="true">
                      <g transform={i < 6 ? "translate(4 0)" : undefined} stroke="#222">
                        {s.double ? (
                          <path d="M0 1.500h54M0 4.500h54" />
                        ) : (
                          <path d={s.w === 1 ? "M0 3.500h54" : s.w === 3 ? "M0 2.500h55" : "M0 3h54"} strokeWidth={s.w} strokeDasharray={s.dash} />
                        )}
                      </g>
                    </svg>
                  </button>
                ))}
              </div>
              <label htmlFor="color" className="mt-[10px] block leading-[16px]"><u>C</u>olor:</label>
              <div className="relative mt-px h-[21px]">
                <select id="color" className="h-full w-full appearance-none border border-[#ababab] bg-white pl-[25px]">
                  <option>Automático</option>
                </select>
                <span className="pointer-events-none absolute top-0 right-0 flex h-[21px] w-[19px] items-center justify-center border border-[#7aa9dd] bg-[#d5e6f8]">
                  <Svg w={9} h={7}><path d="M1 1l3.500 4L8 1" stroke="#111" strokeWidth="2" /></Svg>
                </span>
                <Svg w={14} h={20} className="absolute top-[18px] left-[122px] z-10">
                  <path d="M1 1v15l3.500-3 2.500 6 2.500-1-2.500-6h5z" fill="#fff" stroke="#444" />
                </Svg>
              </div>
            </fieldset>

            <div className="w-[248px]">
              <h3 className="flex items-center gap-[6px] leading-[16px]">Preestablecidos<span className="h-px flex-1 bg-[#dcdcdc]" /></h3>
              <div className="mt-[6px] flex gap-[11px] pl-[43px]">
                <Preset text="Ninguno" mark={0} solid={[]} />
                <Preset text="Contorno" mark={1} solid={["top", "bottom", "left", "right"]} />
                <Preset text="Interior" mark={2} solid={["mid", "center"]} />
              </div>
              <h3 className="mt-[6px] flex items-center gap-[6px] leading-[16px]">Borde<span className="h-px flex-1 bg-[#dcdcdc]" /></h3>
              <div className="mt-[5px] flex gap-[10px] pl-[10px]">
                <div className="flex flex-col justify-between">
                  <EdgeButton label="Borde superior" edge="top" />
                  <EdgeButton label="Borde horizontal" edge="mid" />
                  <EdgeButton label="Borde inferior" edge="bottom" />
                </div>
                <div className="relative h-[100px] w-[172px] border border-[#999] bg-white px-[10px] py-[9px]">
                  <div className="grid h-full grid-cols-2 grid-rows-2 border-t border-l border-[#222]">
                    {[1, 2, 3, 4].map((n) => (
                      <span key={n} className="flex items-center justify-center border-r border-b border-[#222] pt-px">Texto</span>
                    ))}
                  </div>
                  <Svg w={170} h={98} className="pointer-events-none absolute inset-0">
                    <path d="M4 9.500h6M10.500 4v5M84.500 4v5M159.500 4v5M160 9.500h6M4 49.500h6M160 49.500h6M4 88.500h6M160 88.500h6M10.500 89v5M84.500 89v5M159.500 89v5" stroke="#777" />
                  </Svg>
                </div>
              </div>
              <div className="mt-[4px] flex pl-[10px]">
                <EdgeButton label="Diagonal ascendente" edge="up" off />
                <span className="ml-[10px] flex w-[172px] justify-between">
                  <EdgeButton label="Borde izquierdo" edge="left" />
                  <EdgeButton label="Borde vertical" edge="center" />
                  <EdgeButton label="Borde derecho" edge="right" />
                </span>
                <span className="ml-[10px]"><EdgeButton label="Diagonal descendente" edge="down" off /></span>
              </div>
            </div>
          </div>
          <p className="mt-[12px] w-[535px] leading-[14px]">
            El estilo de borde seleccionado puede aplicarse al hacer clic en alguno de los preestablecidos, en el diagrama de vista previa o en los botones de arriba.
          </p>
        </div>
        <div className="mt-[9px] flex justify-end gap-[10px]">
          <button className="h-[23px] w-[77px] border border-[#5ea3dc] bg-[#eaeef2]">Aceptar</button>
          <button className="h-[23px] w-[76px] border border-[#b5b5b5] bg-[#e9e9e9]">Cancelar</button>
        </div>
      </div>
    </div>
  );
}

/* ---------- screen recorder ---------- */

function RecButton({ label, light, children }: Kids & { label: string; light?: boolean }) {
  return (
    <button
      aria-label={label}
      className={clsx("flex items-center justify-center overflow-hidden border-t border-l border-[#4d4d4d]", light ? "bg-linear-to-b from-[#f4f4f4] to-[#c9c9c9]" : "bg-linear-to-b from-[#969696] to-[#6c6c6c]")}
    >
      {children}
    </button>
  );
}

function Recorder() {
  return (
    <div className="absolute right-0 bottom-0 z-30 grid h-[60px] grid-cols-[51px_30px_79px_30px_30px_30px_29px_29px_21px] grid-rows-2 bg-[#4d4d4d]">
      <div className="row-span-2 grid">
        <RecButton label="Detener"><span className="size-[26px] bg-[#d9002b] shadow-[0_0_3px_1px_#ddd]" /></RecButton>
      </div>
      <RecButton label="Captura">
        <Svg w={24} h={20}>
          <path d="M2 5h5l2-3h7l2 3h4v13H2z" fill="#48506c" stroke="#d0d0d8" strokeWidth="1.200" />
          <circle cx="12" cy="11" r="5" fill="#2e3a80" stroke="#8e99c9" strokeWidth="1.500" />
          <circle cx="12" cy="11" r="2" fill="#9cb0f0" />
        </Svg>
      </RecButton>
      <div className="row-span-2 flex items-center justify-center border-t border-[#4d4d4d] bg-black font-['Liberation_Mono'] text-[15px] text-[#6fbf7f]">00:01:28</div>
      <div className="col-span-4 flex items-center justify-center border-t border-l border-[#4d4d4d] bg-linear-to-b from-[#8a8a8a] to-[#707070] text-[12px] text-white text-shadow-sm">1366 × 768</div>
      <RecButton label="Región" light><Svg w={18} h={14}><path d="M1.500 1.500h15v11h-15z" stroke="#41c463" strokeWidth="3" /></Svg></RecButton>
      <RecButton label="Minimizar"><Svg w={14} h={5} className="ml-[4px]"><path d="M0 0h14v5H0z" fill="#3f86c4" stroke="#d5e4f0" /></Svg></RecButton>
      <RecButton label="Pausa"><Svg w={18} h={18}><path d="M1 1h6.500v16H1zM10.500 1H17v16h-6.500z" fill="#3f8fc9" stroke="#d5e4f0" /></Svg></RecButton>
      <RecButton label="Sonido" light>
        <Svg w={22} h={20}><path d="M1 7h4l6-5v16l-6-5H1z" fill="#a5cbe4" stroke="#3a7da8" /><path d="M13 6c2 2 2 6 0 8M15.500 4c3 3 3 9 0 12M18 2c4 4 4 12 0 16" stroke="#3a7da8" strokeWidth="1.400" /></Svg>
      </RecButton>
      <RecButton label="Micrófono" light>
        <Svg w={16} h={22}><rect x="5" y="1" width="6" height="13" rx="3" fill="#8fc1e0" stroke="#3a7da8" /><path d="M2 8v4c0 6 12 6 12 0V8M8 17v3M4 20.500h8M5 5h6M5 8h6M5 11h6" stroke="#3a7da8" strokeWidth="1.200" /></Svg>
      </RecButton>
      <RecButton label="Cámara web">
        <Svg w={20} h={22}><path d="M3 20l3-4h8l3 4z" fill="#4a8fb8" stroke="#c5d8e5" /><circle cx="10" cy="9.500" r="8" fill="#5d9cc4" stroke="#c5d8e5" /><circle cx="10" cy="9.500" r="4.500" fill="#2f6d96" /><circle cx="10" cy="9.500" r="2" fill="#9fcbe6" /></Svg>
      </RecButton>
      <RecButton label="Cursor" light>
        <Svg w={14} h={20}><path d="M2 1.500v13l3-2.500 3 6 2.500-1.200L7.500 11h4z" fill="#fff" stroke="#222" strokeWidth="1.500" /></Svg>
      </RecButton>
      <RecButton label="Lápiz">
        <Svg w={22} h={20}><path d="M14 1l6 5L8 17l-6 2 1-7z" fill="#2e8fc6" stroke="#cfe3ef" /><path d="M3 12l5 5-6 2z" fill="#f3e7d0" /></Svg>
      </RecButton>
      <RecButton label="Carpeta"><Svg w={18} h={16} className="ml-[4px]"><path d="M1 15V2h6l2 2h9v11z" fill="#f3c832" stroke="#c99f1c" /></Svg></RecButton>
    </div>
  );
}

export default function App() {
  return (
    <div className="relative flex h-screen min-h-[700px] flex-col overflow-hidden bg-white font-['Noto_Sans',sans-serif]">
      <div className="h-[10px] shrink-0 bg-[#2b2b2b]" />
      <TitleBar />
      <TabRow />
      <Ribbon />
      <FormulaBar />
      <Sheet />
      <SheetTabs />
      <footer className="flex h-[22px] shrink-0 items-center bg-[#217346] text-[11px] text-white">
        <span className="-ml-[11px] w-[88px]">LISTO</span>
        <Svg w={14} h={13}>
          <path d="M2.500 2.500h11v10h-11zM3 6.500h10M3 9.500h10M6.500 5v7M10 5v7" stroke="#e8f3ec" />
          <circle cx="3" cy="3" r="3" fill="#fff" />
        </Svg>
      </footer>
      <Dialog />
      <button aria-label="Siguiente" className="absolute top-[366px] right-0 z-10">
        <Svg w={32} h={70}>
          <path d="M7 10l27 25L7 61" stroke="#0000001a" strokeWidth="8" strokeLinecap="round" />
          <path d="M7 9l27 25L7 60" stroke="#fff" strokeWidth="6" strokeLinecap="round" />
        </Svg>
      </button>
      <Recorder />
    </div>
  );
}
